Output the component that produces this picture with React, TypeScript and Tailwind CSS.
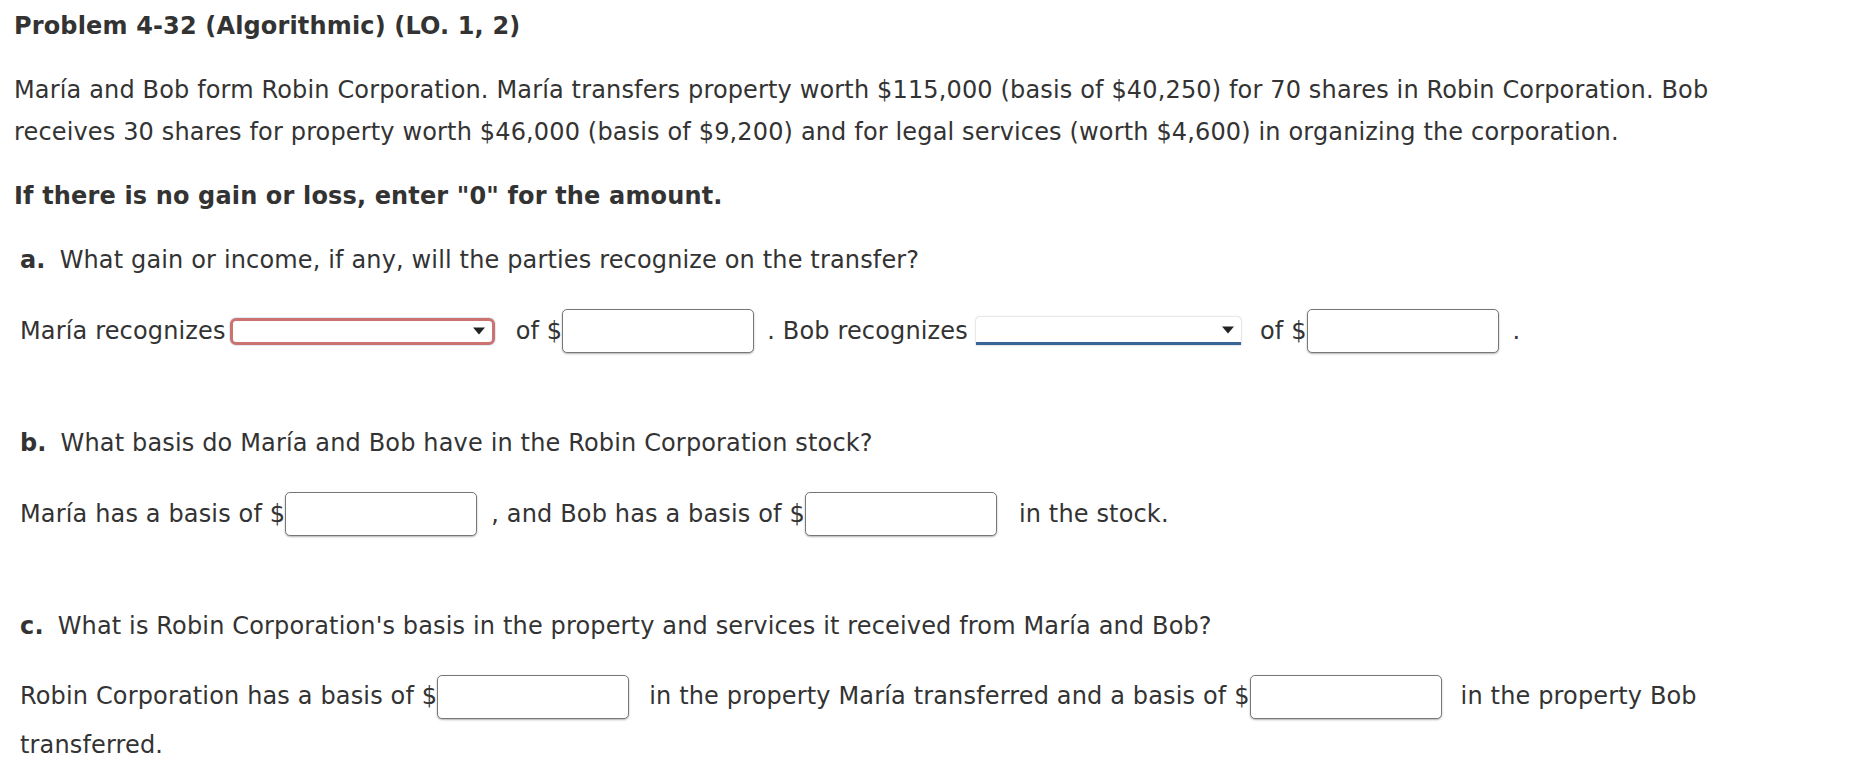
const Arrow = () => (
  <svg width="12" height="8" viewBox="0 0 12 8" className="absolute right-[7px] top-1/2 -translate-y-1/2">
    <path d="M0 0.5 H12 L6 7.5 Z" fill="#222" />
  </svg>
);

const Input = ({ inline = false }: { inline?: boolean }) => (
  <span
    className={`${inline ? "inline-block align-middle" : "block"} w-[192px] h-[44px] bg-white border border-[#777] rounded-[5px] shadow-[0_1px_2px_rgba(0,0,0,0.3)]`}
  />
);

const SelectRed = () => (
  <span className="relative block w-[265px] h-[27px] bg-white border-[3px] border-[#cc736f] rounded-[6px] shadow-[0_0_0_1px_#dfe8f5]">
    <Arrow />
  </span>
);

const SelectBlue = () => (
  <span className="relative block w-[265px] h-[28px] bg-white border-b-[3px] border-[#3a6597] rounded-t-[4px] shadow-[0_0_2px_rgba(0,0,0,0.35)]">
    <Arrow />
  </span>
);

export default function App() {
  return (
    <div className="h-[780px] overflow-hidden w-[1864px] bg-white font-['DejaVu_Sans',Verdana,sans-serif] text-[24px] tracking-[0.15px] text-[#333]">
      <div className="w-[1760px] pl-[14px]">
        <div className="pt-[11px] font-bold leading-[30px]">Problem 4-32 (Algorithmic) (LO. 1, 2)</div>
        <p className="mt-[28px] leading-[42px]">
          María and Bob form Robin Corporation. María transfers property worth $115,000 (basis of $40,250) for 70
          shares in Robin Corporation. Bob receives 30 shares for property worth $46,000 (basis of $9,200) and for
          legal services (worth $4,600) in organizing the corporation.
        </p>
        <p className="mt-[22px] font-bold leading-[42px]">If there is no gain or loss, enter "0" for the amount.</p>
        <div className="pl-[6px]">
          <p className="mt-[22px] leading-[42px]">
            <span className="font-bold mr-[14px]">a.</span>What gain or income, if any, will the parties recognize on
            the transfer?
          </p>
          <div className="mt-[25px] flex h-[50px] items-center whitespace-nowrap">
            <span>María recognizes</span>
            <span className="ml-[4px]">
              <SelectRed />
            </span>
            <span className="ml-[21px]">of $</span>
            <Input />
            <span className="ml-[13px]">. Bob recognizes</span>
            <span className="ml-[8px]">
              <SelectBlue />
            </span>
            <span className="ml-[19px]">of $</span>
            <Input />
            <span className="ml-[14px]">.</span>
          </div>
          <p className="mt-[66px] leading-[42px]">
            <span className="font-bold mr-[14px]">b.</span>What basis do María and Bob have in the Robin Corporation
            stock?
          </p>
          <div className="mt-[25px] flex h-[50px] items-center whitespace-nowrap">
            <span>María has a basis of $</span>
            <Input />
            <span className="ml-[14px]">, and Bob has a basis of $</span>
            <Input />
            <span className="ml-[22px]">in the stock.</span>
          </div>
          <p className="mt-[66px] leading-[42px]">
            <span className="font-bold mr-[14px]">c.</span>What is Robin Corporation's basis in the property and
            services it received from María and Bob?
          </p>
          <p className="mt-[25px] leading-[49px]">
            Robin Corporation has a basis of $<Input inline />
            <span className="ml-[20px]">in the property María transferred and a basis of $</span>
            <Input inline />
            <span className="ml-[19px]">in the property Bob transferred.</span>
          </p>
        </div>
      </div>
    </div>
  );
}
